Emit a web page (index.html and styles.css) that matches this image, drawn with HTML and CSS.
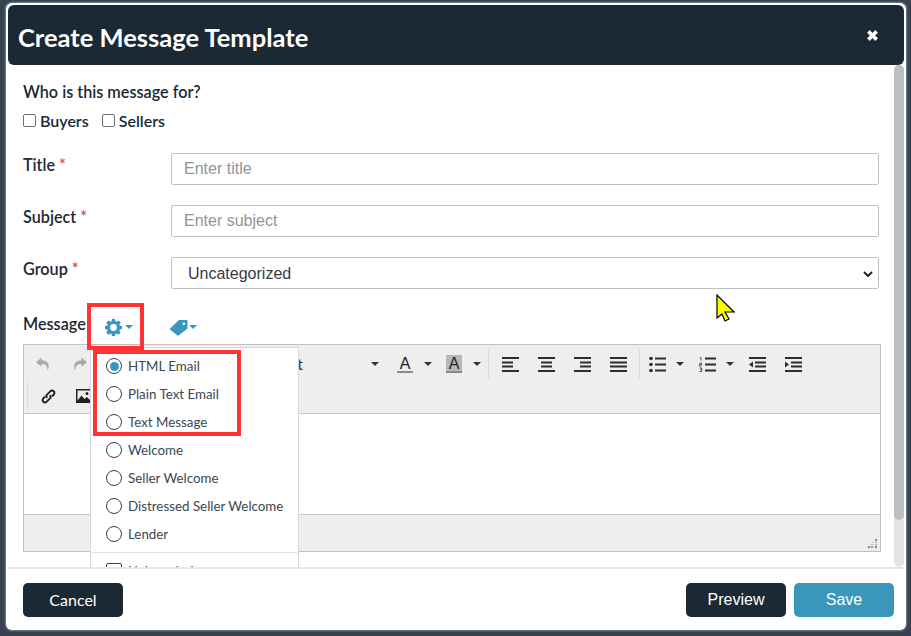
FILE: index.html
```html
<!DOCTYPE html>
<html lang="en">
<head>
<meta charset="utf-8">
<title>Create Message Template</title>
<link rel="stylesheet" href="styles.css">
</head>
<body>
<div class="modal">
  <header class="modal-head">
    <h1>Create Message Template</h1>
    <svg class="close" viewBox="0 0 12 12" aria-label="Close"><path d="M1 3.400 3.400 1 6 3.600 8.600 1 11 3.400 8.400 6 11 8.600 8.600 11 6 8.400 3.400 11 1 8.600 3.600 6Z"/></svg>
  </header>
  <div class="modal-main">
    <div class="modal-body">
      <p class="question">Who is this message for?</p>
      <div class="checks">
        <label class="check"><span class="box"></span>Buyers</label>
        <label class="check"><span class="box"></span>Sellers</label>
      </div>
      <div class="row"><span class="lbl">Title <em>*</em></span><div class="field ph">Enter title</div></div>
      <div class="row"><span class="lbl">Subject <em>*</em></span><div class="field ph">Enter subject</div></div>
      <div class="row"><span class="lbl">Group <em>*</em></span>
        <div class="field sel"><span>Uncategorized</span>
          <svg class="chev" viewBox="0 0 10 6"><path d="M1 1 5 5 9 1" fill="none" stroke="#222" stroke-width="2"/></svg>
        </div>
      </div>
      <div class="msg-row">
        <span class="lbl">Message</span>
        <span class="tool-btn gear">
          <svg viewBox="0 0 16 16" width="17" height="17"><path fill-rule="evenodd" fill="#3a96bb" d="M6.600 0h2.800l.4 2.200 1.200.5L12.800 1.400l2 2-1.300 1.800.5 1.200 2 .3v2.800l-2 .4-.5 1.200 1.200 1.800-2 2-1.800-1.200-1.200.5-.4 2H6.600l-.4-2-1.200-.5-1.800 1.200-2-2 1.200-1.800-.5-1.200-1.900-.4V6.700l2-.3.5-1.200-1.300-1.800 2-2L4.900 2.700l1.300-.5ZM8 4.800a3.200 3.200 0 1 0 0 6.400 3.200 3.200 0 0 0 0-6.400Z"/></svg>
          <i class="caret blue"></i>
        </span>
        <span class="tool-btn tag">
          <svg viewBox="0 0 18 16" width="20" height="17"><path fill-rule="evenodd" fill="#3a96bb" d="M9 1h7.200c.5 0 .8.300.8.800V9L8.800 15.400c-.5.500-1.100.500-1.600 0L.8 10.200c-.5-.5-.5-1.100 0-1.600ZM13.600 3.200a1.300 1.300 0 1 0 0 2.600 1.300 1.300 0 0 0 0-2.600Z"/></svg>
          <i class="caret blue"></i>
        </span>
      </div>
      <div class="editor">
        <div class="toolbar">
          <div class="tb-line">
            <span class="ti"><svg viewBox="0 0 16 14" width="15" height="14"><path fill="#a9a9a9" d="M6 0 0 5l6 5V7c4 0 6 1.500 6.500 7C15.500 8 12.500 3.200 6 3Z"/></svg></span>
            <span class="ti"><svg viewBox="0 0 16 14" width="15" height="14"><path fill="#a9a9a9" d="M10 0l6 5-6 5V7C6 7 4 8.500 3.500 14 .5 8 3.500 3.200 10 3Z"/></svg></span>
            <span class="font-name">12pt</span>
            <i class="caret dark c-first"></i>
            <span class="ti a a1"><b class="a-letter">A</b></span>
            <i class="caret dark"></i>
            <span class="ti a a2 hl"><b class="a-letter">A</b></span>
            <i class="caret dark"></i>
            <span class="sep sep1"></span>
            <span class="ti"><svg class="lines" viewBox="0 0 17 15"><path d="M0 1h17M0 5.600h11M0 9.400h11M0 14h17"/></svg></span>
            <span class="ti"><svg class="lines" viewBox="0 0 17 15"><path d="M0 1h17M3 5.600h11M3 9.400h11M0 14h17"/></svg></span>
            <span class="ti"><svg class="lines" viewBox="0 0 17 15"><path d="M0 1h17M6 5.600h11M6 9.400h11M0 14h17"/></svg></span>
            <span class="ti"><svg class="lines" viewBox="0 0 17 15"><path d="M0 1h17M0 5.600h17M0 9.400h17M0 14h17"/></svg></span>
            <span class="sep sep2"></span>
            <span class="ti bullets"><svg class="lines" viewBox="0 0 17 15"><circle cx="2" cy="1.500" r="1.800" class="dot"/><circle cx="2" cy="7.500" r="1.800" class="dot"/><circle cx="2" cy="13.500" r="1.800" class="dot"/><path d="M6 1.500h11M6 7.500h11M6 13.500h11"/></svg></span>
            <i class="caret dark c-bullets"></i>
            <span class="ti numbers"><svg class="lines" viewBox="0 0 17 15"><path class="num" d="M1 .5h1v3M.5 6h2v1.500h-2v1.500h2.200M.5 11h2.200v1.700H1.200M2.700 12.700v1.800H.5"/><path d="M6 1.500h11M6 7.500h11M6 13.500h11"/></svg></span>
            <i class="caret dark c-numbers"></i>
            <span class="ti outdent"><svg class="lines" viewBox="0 0 17 15"><path d="M0 1h17M6 5.600h11M6 9.400h11M0 14h17"/><path class="tri" d="M4 4.500v6L0 7.500Z"/></svg></span>
            <span class="ti"><svg class="lines" viewBox="0 0 17 15"><path d="M0 1h17M6 5.600h11M6 9.400h11M0 14h17"/><path class="tri" d="M0 4.500v6l4-3Z"/></svg></span>
          </div>
          <div class="tb-line second">
            <span class="sep lead"></span>
            <span class="ti"><svg viewBox="0 0 16 16" width="17" height="17"><path fill="none" stroke="#222" stroke-width="1.800" d="M6.800 9.200c-1-1-1-2.200-.2-3l3-3c1-1 2.400-1 3.300-.1s.9 2.300-.1 3.300l-1.500 1.500M9.200 6.800c1 1 1 2.200.2 3l-3 3c-1 1-2.400 1-3.300.1s-.9-2.300.1-3.300l1.500-1.500"/></svg></span>
            <span class="ti"><svg viewBox="0 0 16 14" width="16" height="14"><path fill="#222" fill-rule="evenodd" d="M0 0h16v14H0Zm1.500 1.500v10l4-5 3 3.500 2.500-2 3.500 3.500V1.500ZM11 3a1.500 1.500 0 1 1 0 3 1.500 1.500 0 0 1 0-3Z"/></svg></span>
          </div>
        </div>
        <div class="edit-area"></div>
        <div class="status">
          <svg class="grip" viewBox="0 0 10 10"><path fill="#6d6d6d" d="M8 0h2v2H8ZM5 3h1v1H5Zm3 0h2v1H8ZM3 6h1v1H3Zm2 0h1v1H5Zm3 0h2v1H8ZM0 8h2v2H0Zm3 0h1v2H3Zm2 0h1v2H5Zm3 0h2v2H8Z"/></svg>
        </div>
      </div>
      <div class="menu">
        <div class="mi"><span class="radio on"></span>HTML Email</div>
        <div class="mi"><span class="radio"></span>Plain Text Email</div>
        <div class="mi"><span class="radio"></span>Text Message</div>
        <div class="mi"><span class="radio"></span>Welcome</div>
        <div class="mi"><span class="radio"></span>Seller Welcome</div>
        <div class="mi"><span class="radio"></span>Distressed Seller Welcome</div>
        <div class="mi"><span class="radio"></span>Lender</div>
        <div class="mi-div"></div>
        <div class="mi"><span class="sq"></span>Unbranded</div>
      </div>
      <div class="mark mark-gear"></div>
      <div class="mark mark-items"></div>
    </div>
    <div class="scrollbar"><div class="thumb"></div></div>
  </div>
  <footer class="modal-foot">
    <button class="btn dark-btn cancel">Cancel</button>
    <div class="foot-right">
      <button class="btn dark-btn">Preview</button>
      <button class="btn blue-btn">Save</button>
    </div>
  </footer>
</div>
<svg class="cursor" viewBox="0 0 20 28" width="20" height="28"><path fill="#ff0" stroke="#000" stroke-width="1.200" d="M1 1V24L6 20 9 27 13 25 9 18H18Z"/></svg>
</body>
</html>
```
FILE: styles.css
```css
* { box-sizing: border-box; }
html, body { margin: 0; height: 100%; }
body {
  width: 911px; height: 636px; overflow: hidden; position: relative;
  background: #33424e; padding: 3px 5px 6px 6px;
  font-family: Lato, sans-serif; color: #1b2935;
}
.modal {
  height: 627px; background: #fff; border-radius: 6px; padding: 2px;
  display: flex; flex-direction: column; position: relative;
  box-shadow: 0 0 2px 1px rgba(255,255,255,.35);
}
.modal-head {
  height: 60px; flex: none; background: #1b2935; color: #fff; border-radius: 6px;
  display: flex; align-items: center; justify-content: space-between;
  padding: 4px 25px 0 10px;
}
.modal-head h1 { margin: 0; font-size: 25.500px; font-weight: 700; }
.close { width: 13px; height: 13px; fill: #fff; margin-top: -4px; }
.modal-main { flex: none; height: 502px; display: flex; overflow: hidden; position: relative; }
.modal-body { flex: 1; padding: 17px 0 0 15px; position: relative; overflow: hidden; }
.scrollbar { width: 10px; background: #e3e4e5; border-radius: 5px; flex: none; }
.thumb { height: 455px; background: #babfc3; border-radius: 5px; }
.question { margin: 0; font-size: 16.200px; font-weight: 600; line-height: 20px; }
.checks { display: flex; gap: 13px; margin-top: 8px; height: 20px; }
.check { display: flex; align-items: center; gap: 4px; font-size: 16px; font-weight: 600; }
.box { width: 13px; height: 13px; border: 1px solid #6f6f6f; border-radius: 2px; background: #fff; }
.row { display: flex; margin-top: 20px; height: 32px; }
.checks + .row { margin-top: 23px; }
.lbl { width: 148px; flex: none; font-size: 16.200px; font-weight: 600; line-height: 24px; }
.lbl em { color: #e8504f; font-style: normal; font-weight: 600; }
.field {
  width: 708px; height: 32px; border: 1px solid #bfc1c3; border-radius: 2px;
  font-family: "Liberation Sans", sans-serif; font-size: 16px; line-height: 30px; padding: 0 12px;
}
.ph { color: #8f9599; }
.sel { color: #333d45; padding: 1px 5px 0 16px; display: flex; align-items: center; justify-content: space-between; }
.chev { width: 10px; height: 6px; }
.msg-row { display: flex; align-items: center; height: 24px; margin-top: 23px; }
.msg-row .lbl { width: auto; }
.tool-btn { display: inline-flex; align-items: center; gap: 3px; padding-top: 6px; }
.gear { margin-left: 19px; }
.tag { margin-left: 36px; gap: 0; }
.caret { display: inline-block; flex: none; width: 0; height: 0; border-left: 4px solid transparent; border-right: 4px solid transparent; border-top: 4px solid #000; }
.caret.blue { border-top-color: #3a96bb; }
.caret.dark { border-top-color: #333; }
.editor { width: 858px; height: 208px; margin-top: 8px; border: 1px solid #c1c1c1; background: #fff; display: flex; flex-direction: column; }
.toolbar { height: 69px; flex: none; background: #eee; border-bottom: 1px solid #c9c9c9; padding: 4px 0 0 1px; }
.tb-line { display: flex; align-items: center; height: 30px; }
.tb-line.second { height: 30px; margin-top: 2px; }
.ti { width: 36px; height: 28px; display: flex; align-items: center; justify-content: center; flex: none; }
.font-name { width: 206px; text-align: right; flex: none; font-size: 15px; color: #333; }
.c-first { margin-left: 68px; }
.a { width: 24px; }
.a1 { margin-left: 14px; margin-right: 7px; }
.a2 { margin-left: 10px; margin-right: 7px; }
.a-letter { font: 400 16px/17px "Liberation Sans", sans-serif; width: 16px; height: 18px; display: block; text-align: center; border-bottom: 2px solid #8a8a8a; color: #222; }
.hl .a-letter { background: #b7b7b7; }
.sep { width: 1px; height: 30px; background: #d9d9d9; flex: none; }
.sep1 { margin: 0 3px 0 7px; }
.sep2 { margin: 0 0 0 3px; }
.sep.lead { margin: 0 2px; height: 28px; }
.bullets { width: 26px; margin-left: 4px; }
.c-bullets { margin-left: 6px; }
.numbers { margin-left: 5px; }
.c-numbers { margin-left: 1px; }
.outdent { margin-left: 5px; }
.lines { width: 17px; height: 15px; }
.lines path { stroke: #2d2d2d; stroke-width: 2; fill: none; }
.lines .dot { fill: #2d2d2d; }
.lines .num { stroke-width: .8; }
.lines .tri { fill: #2d2d2d; stroke: none; }
.edit-area { height: 100px; flex: none; background: #fff; }
.status { flex: 1; background: #eee; border-top: 1px solid #c9c9c9; display: flex; justify-content: flex-end; align-items: flex-end; padding: 0 3px 3px 0; }
.grip { width: 9px; height: 9px; }
.menu {
  position: absolute; left: 82px; top: 282px; width: 209px; background: #fff;
  border: 1px solid #d4d6d8; padding: 4px 0; font-size: 13.350px; color: #3a4853;
}
.mi { height: 28px; display: flex; align-items: center; padding-left: 15px; gap: 6px; white-space: nowrap; }
.radio { width: 16px; height: 16px; border: 1px solid #36434e; border-radius: 50%; background: #fff; flex: none; display: flex; align-items: center; justify-content: center; }
.radio.on::after { content: ""; width: 9px; height: 9px; border-radius: 50%; background: #3a96bb; }
.sq { width: 16px; height: 16px; border: 1px solid #36434e; border-radius: 2px; flex: none; }
.mi-div { height: 1px; background: #e3e4e5; margin: 4px 0; }
.mark { position: absolute; border: 4px solid #ff3333; pointer-events: none; }
.mark-gear { left: 79px; top: 238px; width: 57px; height: 47px; }
.mark-items { left: 85px; top: 285px; width: 148px; height: 86px; }
.modal-foot {
  flex: 1; border-top: 2px solid #e6e6e6; display: flex; justify-content: space-between; padding: 14px 10px 0 15px;
}
.foot-right { display: flex; gap: 8px; }
.btn { width: 100px; height: 34px; border: 0; border-radius: 5px; color: #fff; font: 400 16px "Liberation Sans", sans-serif; }
.cancel { font: 400 16px Lato, sans-serif; padding-bottom: 3px; }
.dark-btn { background: #1b2935; }
.blue-btn { background: #3a96bb; }
.cursor { position: absolute; left: 716px; top: 294px; }
```
